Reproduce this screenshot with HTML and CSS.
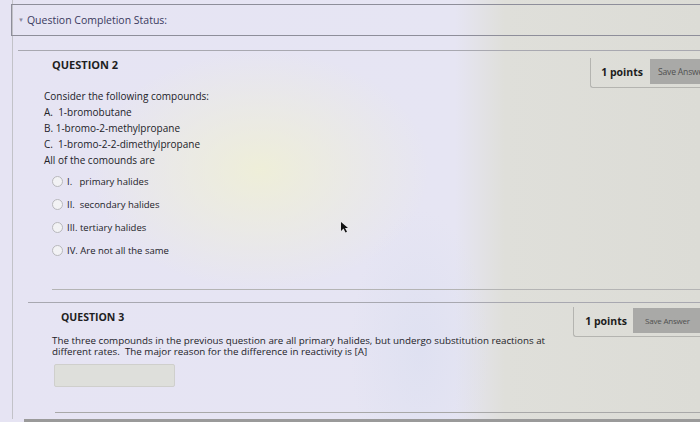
FILE: index.html
```html
<!DOCTYPE html>
<html>
<head>
<meta charset="utf-8">
<link rel="stylesheet" href="styles.css">
</head>
<body>
<div class="screen">
  <div class="frame">
    <div class="status">
      <span class="caret">&#9660;</span><span class="status-text">Question Completion Status:</span>
    </div>

    <div class="question q2">
      <div class="q-head">
        <h2 class="q-title">QUESTION 2</h2>
        <div class="points-box">
          <span class="points">1 points</span>
          <span class="save">Save Answer</span>
        </div>
      </div>
      <div class="q-body">
        <p class="line">Consider the following compounds:</p>
        <p class="line">A.&nbsp; 1-bromobutane</p>
        <p class="line">B. 1-bromo-2-methylpropane</p>
        <p class="line">C.&nbsp; 1-bromo-2-2-dimethylpropane</p>
        <p class="line">All of the comounds are</p>
        <ul class="options">
          <li class="option"><span class="radio"></span><span>I.&nbsp;&nbsp; primary halides</span></li>
          <li class="option"><span class="radio"></span><span>II.&nbsp; secondary halides</span></li>
          <li class="option"><span class="radio"></span><span>III. tertiary halides</span></li>
          <li class="option"><span class="radio"></span><span>IV. Are not all the same</span></li>
        </ul>
      </div>
      <div class="q-end"></div>
    </div>

    <div class="question q3">
      <div class="q-head">
        <h2 class="q-title">QUESTION 3</h2>
        <div class="points-box">
          <span class="points">1 points</span>
          <span class="save">Save Answer</span>
        </div>
      </div>
      <div class="q-body">
        <p class="para">The three compounds in the previous question are all primary halides, but undergo substitution reactions at different rates.&nbsp; The major reason for the difference in reactivity is [A]</p>
        <div class="answer-box"></div>
      </div>
      <div class="q-end"></div>
    </div>
  </div>
  <div class="bottom-strip"></div>
</div>
<svg class="cursor" width="9" height="12" viewBox="0 0 9 12"><path d="M1 1 L1 10 L3.5 7.5 L5.5 11.5 L7 10.8 L5 7 L8 7 Z" fill="#111"/></svg>
</body>
</html>
```
FILE: styles.css
```css
html, body {
  margin: 0;
  padding: 0;
}
body {
  width: 700px;
  height: 422px;
  overflow: hidden;
  font-family: "Open Sans", "Noto Sans", sans-serif;
  color: #222226;
  background:
    radial-gradient(ellipse 170px 120px at 260px 170px, rgba(240,240,212,0.85), rgba(240,240,212,0) 100%),
    radial-gradient(ellipse 70px 140px at 420px 350px, rgba(218,222,240,0.6), rgba(218,222,240,0) 100%),
    linear-gradient(90deg, #e6e4f3 0px, #e6e5f3 455px, #dfdfda 505px, #dcdcd6 700px);
  position: relative;
}
.screen {
  height: 422px;
  display: flex;
  flex-direction: column;
  padding-left: 12px;
  box-sizing: border-box;
}
.frame {
  flex: 1;
  border-left: 1px solid #c2c2c8;
  padding-top: 4px;
}
.status {
  margin-left: -2px;
  height: 30px;
  border: 1px solid #8e8e9a;
  border-right: none;
  display: flex;
  align-items: center;
  font-size: 10.5px;
  color: #3a3a5e;
}
.caret {
  font-size: 6px;
  color: #8a8aa0;
  margin: 0 3px 0 6px;
}
.question {
  margin-left: 5px;
  border-top: 1px solid #a8a8b0;
}
.q2 {
  margin-top: 14px;
}
.q-head {
  display: flex;
  justify-content: space-between;
  align-items: flex-start;
}
.q-title {
  margin: 0;
  font-size: 11px;
  font-weight: 700;
  color: #1e1e22;
}
.q2 .q-title {
  padding: 6px 0 0 34px;
}
.points-box {
  display: flex;
  align-items: center;
  border: 1px solid #b4b4b0;
  border-top: none;
  border-right: none;
  border-radius: 0 0 0 3px;
  padding: 1px 0 3px 11px;
  gap: 7px;
}
.q2 .points-box {
  margin-top: 7px;
  height: 25px;
  padding-left: 10px;
}
.points {
  font-weight: 700;
  font-size: 10.5px;
  color: #1c1c1c;
}
.save {
  background: #a9a9a7;
  color: #505050;
  font-size: 8px;
  letter-spacing: -0.2px;
  height: 100%;
  display: flex;
  align-items: center;
  padding: 0 0 0 10px;
  width: 50px;
  box-sizing: border-box;
  white-space: nowrap;
  overflow: hidden;
}
.q2 .save {
  font-size: 8.6px;
  padding-left: 8px;
}
.q-body {
  padding-left: 26px;
}
.line {
  margin: 0;
  font-size: 10px;
  line-height: 16px;
  color: #222228;
}
.options {
  list-style: none;
  margin: 2px 0 0 0;
  padding: 0 0 0 8px;
}
.option {
  display: flex;
  align-items: center;
  gap: 4px;
  height: 23px;
  font-size: 9.5px;
  color: #222228;
}
.radio {
  width: 9px;
  height: 9px;
  border: 1px solid #b8b8bc;
  border-radius: 50%;
  background: #f2f2f4;
}
.q-end {
  margin: 26px 0 0 34px;
  border-top: 1px solid #b4b4b4;
}
.q2 .q-end {
  margin-top: 27px;
}
.q3 {
  margin-top: 12px;
  margin-left: 15px;
}
.q3 .q-title {
  padding: 7px 0 0 33px;
  font-size: 10.5px;
}
.q3 .points-box {
  margin-top: 4px;
  height: 25px;
  padding-left: 11px;
  gap: 6px;
}
.q3 .save {
  width: 67px;
  padding-left: 12px;
}
.q3 .q-body {
  padding-left: 24px;
  margin-top: -1px;
}
.para {
  margin: 0;
  font-size: 9.8px;
  line-height: 10.5px;
  width: 500px;
  color: #222228;
}
.answer-box {
  margin: 7px 0 0 2px;
  width: 119px;
  height: 21px;
  border: 1px solid #cfcfcc;
  border-radius: 2px;
  background: #dedfdb;
}
.q3 .q-end {
  margin: 25px 0 0 27px;
  border-top-color: #a8a8a8;
}
.bottom-strip {
  height: 3px;
  margin-left: 12px;
  background: #9a9a9a;
}
.cursor {
  position: absolute;
  left: 340px;
  top: 221px;
}
```
